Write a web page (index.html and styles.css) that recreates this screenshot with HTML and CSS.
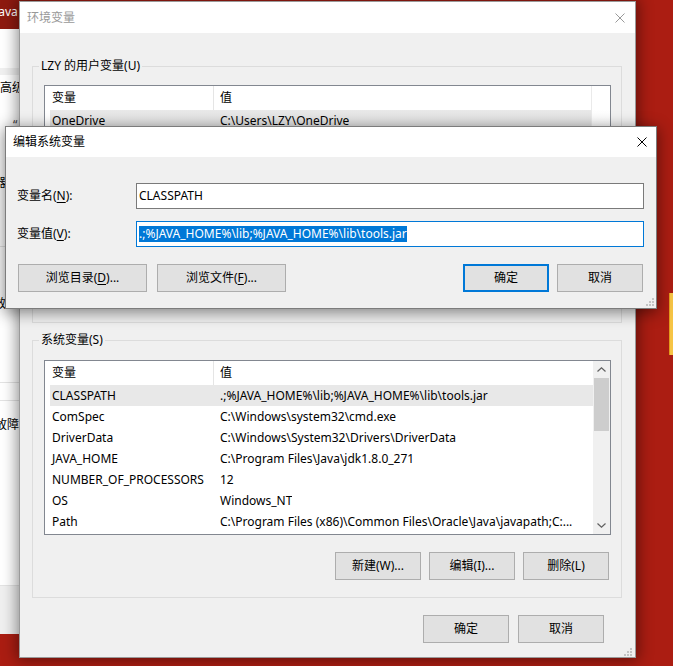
FILE: index.html
```html
<!DOCTYPE html>
<html lang="zh-CN">
<head>
<meta charset="utf-8">
<title>环境变量</title>
<link rel="stylesheet" href="styles.css">
</head>
<body>
<div class="desk">
  <div class="bgwin">
    <div class="bg-title"><span>Java</span></div>
    <div class="bg-sp h39"></div>
    <div class="bg-band"></div>
    <div class="bg-sp h3"></div>
    <div class="bg-item h20">高级</div>
    <div class="bg-sp h17"></div>
    <div class="bg-item h20 q">“</div>
    <div class="bg-sp h37"></div>
    <div class="bg-item h22 cut">器</div>
    <div class="bg-sp h52"></div>
    <div class="bg-line"></div>
    <div class="bg-sp h47"></div>
    <div class="bg-item h20 cut">效</div>
    <div class="bg-sp h68"></div>
    <div class="bg-line"></div>
    <div class="bg-sp h17"></div>
    <div class="bg-line"></div>
    <div class="bg-sp h14"></div>
    <div class="bg-item h20 cut2">故障</div>
    <div class="bg-sp h150"></div>
    <div class="bg-foot"></div>
  </div>

  <div class="yellow"></div>

  <div class="win env">
    <div class="titlebar">
      <span class="ttl">环境变量</span>
      <svg class="xicon" width="10" height="10" viewBox="0 0 10 10"><path d="M0.5 0.5L9.5 9.5M9.5 0.5L0.5 9.5" stroke="#999" stroke-width="1"/></svg>
    </div>
    <div class="ebody">
      <div class="group g-user">
        <div class="glabel">LZY 的用户变量(U)</div>
        <div class="list l-user">
          <div class="lmain">
            <div class="lhead"><div class="hc1">变量</div><div class="hc2">值</div></div>
            <div class="row selrow"><div class="c1">OneDrive</div><div class="c2">C:\Users\LZY\OneDrive</div></div>
            <div class="row"><div class="c1">Path</div><div class="c2">C:\Users\LZY\AppData\Local\Microsoft\WindowsApps;</div></div>
            <div class="row"><div class="c1">TEMP</div><div class="c2">C:\Users\LZY\AppData\Local\Temp</div></div>
            <div class="row"><div class="c1">TMP</div><div class="c2">C:\Users\LZY\AppData\Local\Temp</div></div>
          </div>
          <div class="sb-blank"></div>
        </div>
        <div class="gbtns">
          <div class="btn">新建(N)...</div>
          <div class="btn">编辑(E)...</div>
          <div class="btn">删除(D)</div>
        </div>
      </div>

      <div class="group g-sys">
        <div class="glabel">系统变量(S)</div>
        <div class="list l-sys">
          <div class="lmain">
            <div class="lhead"><div class="hc1">变量</div><div class="hc2">值</div></div>
            <div class="row selrow"><div class="c1">CLASSPATH</div><div class="c2">.;%JAVA_HOME%\lib;%JAVA_HOME%\lib\tools.jar</div></div>
            <div class="row"><div class="c1">ComSpec</div><div class="c2">C:\Windows\system32\cmd.exe</div></div>
            <div class="row"><div class="c1">DriverData</div><div class="c2">C:\Windows\System32\Drivers\DriverData</div></div>
            <div class="row"><div class="c1">JAVA_HOME</div><div class="c2">C:\Program Files\Java\jdk1.8.0_271</div></div>
            <div class="row"><div class="c1">NUMBER_OF_PROCESSORS</div><div class="c2">12</div></div>
            <div class="row"><div class="c1">OS</div><div class="c2">Windows_NT</div></div>
            <div class="row"><div class="c1">Path</div><div class="c2">C:\Program Files (x86)\Common Files\Oracle\Java\javapath;C:...</div></div>
          </div>
          <div class="sb">
            <svg class="arr" width="9" height="5" viewBox="0 0 9 5"><path d="M0.5 4.5L4.5 0.8L8.5 4.5" fill="none" stroke="#606060" stroke-width="1.2"/></svg>
            <div class="thumb"></div>
            <svg class="arr down" width="9" height="5" viewBox="0 0 9 5"><path d="M0.5 0.5L4.5 4.2L8.5 0.5" fill="none" stroke="#606060" stroke-width="1.2"/></svg>
          </div>
        </div>
        <div class="gbtns">
          <div class="btn">新建(W)...</div>
          <div class="btn">编辑(I)...</div>
          <div class="btn">删除(L)</div>
        </div>
      </div>

      <div class="foot">
        <div class="btn">确定</div>
        <div class="btn">取消</div>
      </div>
    </div>
    <svg class="grip g-env" width="9" height="9" viewBox="0 0 9 9"><g fill="#c4c4c4"><rect x="7" y="1" width="2" height="2"/><rect x="4" y="4" width="2" height="2"/><rect x="7" y="4" width="2" height="2"/><rect x="1" y="7" width="2" height="2"/><rect x="4" y="7" width="2" height="2"/><rect x="7" y="7" width="2" height="2"/></g></svg>
  </div>

  <div class="win dlg">
    <div class="titlebar dtitle">
      <span class="ttl">编辑系统变量</span>
      <svg class="xicon" width="10" height="10" viewBox="0 0 10 10"><path d="M0.5 0.5L9.5 9.5M9.5 0.5L0.5 9.5" stroke="#000" stroke-width="1"/></svg>
    </div>
    <div class="dbody">
      <div class="frow">
        <div class="flabel">变量名(<u>N</u>):</div>
        <div class="inp">CLASSPATH</div>
      </div>
      <div class="frow">
        <div class="flabel">变量值(<u>V</u>):</div>
        <div class="inp focus"><span class="sel">.;%JAVA_HOME%\lib;%JAVA_HOME%\lib\tools.jar</span></div>
      </div>
      <div class="dbtns">
        <div class="btn wide first">浏览目录(<u>D</u>)...</div>
        <div class="btn wide">浏览文件(<u>F</u>)...</div>
        <div class="spacer"></div>
        <div class="btn def">确定</div>
        <div class="btn">取消</div>
      </div>
    </div>
    <svg class="grip g-dlg" width="9" height="9" viewBox="0 0 9 9"><g fill="#c4c4c4"><rect x="7" y="1" width="2" height="2"/><rect x="4" y="4" width="2" height="2"/><rect x="7" y="4" width="2" height="2"/><rect x="1" y="7" width="2" height="2"/><rect x="4" y="7" width="2" height="2"/><rect x="7" y="7" width="2" height="2"/></g></svg>
  </div>
</div>
</body>
</html>
```

FILE: styles.css
```css
html, body {
  margin: 0;
  padding: 0;
}
body {
  width: 673px;
  height: 666px;
  overflow: hidden;
  background: #ab1d12;
  font-family: "Noto Sans", "Noto Sans CJK SC", sans-serif;
  font-size: 12px;
  line-height: 16px;
  color: #000;
}
.desk {
  position: relative;
  width: 673px;
  height: 666px;
  overflow: hidden;
}

/* background window on the far left */
.bgwin {
  position: absolute;
  left: 0;
  top: 0;
  width: 40px;
  height: 634px;
  background: #fff;
  display: flex;
  flex-direction: column;
  overflow: hidden;
}
.bg-title {
  height: 29px;
  background: #8e1a10;
  color: #fff;
  display: flex;
  align-items: center;
  flex: none;
  white-space: nowrap;
}
.bg-title span { margin-left: -5px; margin-top: -5px; }
.bg-band { height: 7px; background: #f0f0f0; flex: none; }
.bg-item { flex: none; display: flex; align-items: center; white-space: nowrap; }
.bg-item.q { padding-left: 13px; color: #444; }
.bg-item.cut { margin-left: -6px; }
.bg-item.cut2 { margin-left: -5px; }
.bg-line { height: 1px; background: #e3e3e3; flex: none; }
.bg-sp { flex: none; }
.h3 { height: 3px; }
.h14 { height: 14px; }
.h17 { height: 17px; }
.h20 { height: 20px; }
.h22 { height: 22px; }
.h37 { height: 37px; }
.h39 { height: 39px; }
.h47 { height: 47px; }
.h52 { height: 52px; }
.h68 { height: 68px; }
.h150 { height: 150px; }
.bg-foot { flex: 1; background: #f0f0f0; border-top: 1px solid #e3e3e3; }

.yellow {
  position: absolute;
  left: 669px;
  top: 293px;
  width: 4px;
  height: 62px;
  box-sizing: border-box;
  background: #f6c445;
  border-left: 1px solid #e39a1c;
}

/* windows */
.win {
  position: absolute;
  box-sizing: border-box;
  background: #f0f0f0;
}
.titlebar {
  background: #fff;
  display: flex;
  align-items: center;
  justify-content: space-between;
}
.xicon { display: block; }

.env {
  left: 19px;
  top: 1px;
  width: 617px;
  height: 657px;
  border: 1px solid #9a9a9a;
  box-shadow: 0 0 14px 2px rgba(0, 0, 0, 0.45);
}
.env .titlebar {
  height: 31px;
  padding: 0 10px 0 7px;
  color: #999;
}
.ebody {
  padding: 0 13px 0 12px;
}
.group {
  border: 1px solid #dcdcdc;
  box-sizing: border-box;
}
.g-user { margin-top: 33px; height: 257px; }
.g-sys { margin-top: 17px; height: 258px; }
.glabel {
  width: fit-content;
  margin: -9px 0 0 6px;
  padding: 0 2px;
  background: #f0f0f0;
  line-height: 16px;
}
.list {
  width: 567px;
  box-sizing: border-box;
  border: 1px solid #828790;
  background: #fff;
  display: flex;
  margin-left: 11px;
  overflow: hidden;
}
.l-user { margin-top: 11px; height: 175px; }
.l-sys { margin-top: 12px; height: 175px; }
.lmain {
  flex: 1;
  display: flex;
  flex-direction: column;
  overflow: hidden;
}
.lhead {
  display: flex;
  height: 24px;
  flex: none;
}
.hc1 {
  width: 169px;
  box-sizing: border-box;
  padding-left: 7px;
  border-right: 1px solid #e5e5e5;
  display: flex;
  align-items: center;
}
.hc2 {
  padding-left: 6px;
  display: flex;
  align-items: center;
}
.row {
  display: flex;
  height: 21px;
  flex: none;
  margin-left: 5px;
  align-items: center;
  white-space: nowrap;
}
.row .c1 { width: 164px; box-sizing: border-box; padding-left: 2px; flex: none; overflow: hidden; }
.row .c2 { padding-left: 6px; overflow: hidden; }
.selrow { background: #e8e8e8; }
.l-user .selrow { background: linear-gradient(#e9e9e9, #dedede); }

.sb {
  width: 17px;
  flex: none;
  background: #f0f0f0;
  display: flex;
  flex-direction: column;
  align-items: center;
}
.sb .arr { margin-top: 6px; flex: none; }
.sb .thumb {
  width: 15px;
  height: 53px;
  margin-top: 6px;
  background: #cdcdcd;
  flex: none;
}
.sb .arr.down { margin-top: auto; margin-bottom: 6px; }
.sb-blank {
  width: 18px;
  flex: none;
  border-left: 1px solid #eaeaea;
  background: linear-gradient(#fff 0, #fff 24px, #f4f4f4 60px, #f0f0f0 100%);
}

.gbtns {
  display: flex;
  justify-content: flex-end;
  gap: 8px;
  margin: 17px 12px 0 0;
}
.btn {
  width: 86px;
  height: 28px;
  box-sizing: border-box;
  border: 1px solid #adadad;
  background: #e1e1e1;
  display: flex;
  align-items: center;
  justify-content: center;
  white-space: nowrap;
  flex: none;
}
.foot {
  display: flex;
  justify-content: flex-end;
  gap: 9px;
  margin: 17px 18px 0 0;
}
.grip {
  position: absolute;
  display: block;
}
.g-env { right: 3px; bottom: 1px; }
.g-dlg { right: 2px; bottom: 2px; }

/* edit dialog */
.dlg {
  left: 5px;
  top: 126px;
  width: 652px;
  height: 183px;
  border: 1px solid #7c7c7c;
  box-shadow: 0 3px 14px 1px rgba(0, 0, 0, 0.45);
}
.dlg .titlebar {
  height: 30px;
  padding: 0 9px 0 7px;
}
.dbody {
  padding: 26px 12px 0 11px;
}
.frow {
  display: flex;
  align-items: center;
  height: 26px;
}
.frow + .frow { margin-top: 12px; }
.flabel { width: 119px; flex: none; }
.inp {
  flex: 1;
  height: 26px;
  box-sizing: border-box;
  border: 1px solid #7a7a7a;
  background: #fff;
  padding-left: 2px;
  display: flex;
  align-items: center;
  white-space: nowrap;
  overflow: hidden;
}
.inp.focus { border-color: #0078d7; }
.sel {
  background: #0078d7;
  color: #fff;
  line-height: 16px;
}
.dbtns {
  display: flex;
  margin-top: 17px;
  margin-right: 1px;
}
.btn.wide { width: 129px; }
.btn.first { margin-left: 1px; margin-right: 10px; }
.spacer { flex: 1; }
.btn.def { border: 2px solid #0078d7; margin-right: 8px; }
u { text-decoration: underline; text-underline-offset: 2px; }
```
